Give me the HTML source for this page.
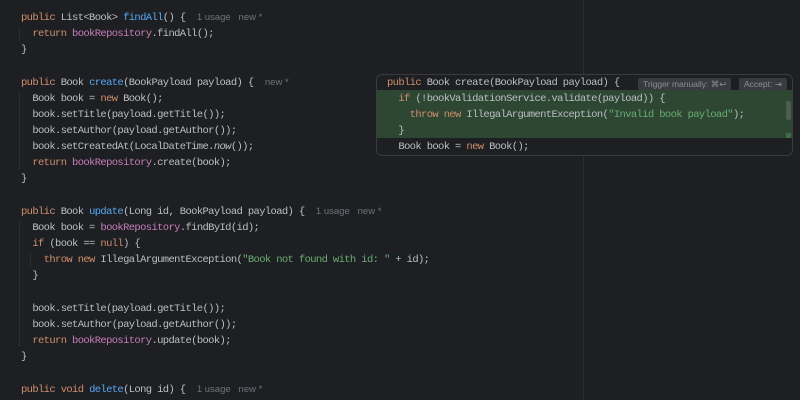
<!DOCTYPE html><html><head><style>
body{margin:0;width:800px;height:400px;background:#1e1f22;overflow:hidden;position:relative;font-family:"Liberation Mono",monospace;font-size:10.5px;letter-spacing:-0.63px;color:#bcbec4}
.l{position:absolute;left:21px;height:16px;line-height:16px;white-space:pre}
.k{color:#cf8e6d}.m{color:#56a8f5}.f{color:#c77dbb}.s{color:#6aab73}.i{font-style:italic}
.h{font-family:"Liberation Sans",sans-serif;font-size:9.5px;letter-spacing:0;color:#6f737a}
.g{position:absolute;width:1px;background:#2b2d30}
#pop{position:absolute;left:376px;top:74px;width:415px;height:80px;border:1px solid #393b40;border-radius:6px;background:#1e1f22;overflow:hidden}
#pop .l{left:10px}
.b{position:absolute;top:3px;height:12px;line-height:12px;background:#393b40;color:#8c8f95;font-family:"Liberation Sans",sans-serif;font-size:8.5px;letter-spacing:0;padding:0 5px;border-radius:2px}
</style></head><body>
<div class="g" style="left:583px;top:0;height:400px"></div>
<div class="g" style="left:19px;top:27px;height:14px"></div>
<div class="g" style="left:19px;top:91px;height:79px"></div>
<div class="g" style="left:19px;top:220px;height:127px"></div>
<div class="g" style="left:30px;top:253px;height:14px"></div>
<div class="l" style="top:10px"><span class="k">public</span> List&lt;Book&gt; <span class="m">findAll</span>() {  <span class="h">1 usage   new *</span></div>
<div class="l" style="top:26px">  <span class="k">return</span> <span class="f">bookRepository</span>.findAll();</div>
<div class="l" style="top:42px">}</div>
<div class="l" style="top:75px"><span class="k">public</span> Book <span class="m">create</span>(BookPayload payload) {  <span class="h">new *</span></div>
<div class="l" style="top:91px">  Book book = <span class="k">new</span> Book();</div>
<div class="l" style="top:107px">  book.setTitle(payload.getTitle());</div>
<div class="l" style="top:123px">  book.setAuthor(payload.getAuthor());</div>
<div class="l" style="top:139px">  book.setCreatedAt(LocalDateTime.<span class="i">now</span>());</div>
<div class="l" style="top:155px">  <span class="k">return</span> <span class="f">bookRepository</span>.create(book);</div>
<div class="l" style="top:171px">}</div>
<div class="l" style="top:204px"><span class="k">public</span> Book <span class="m">update</span>(Long id, BookPayload payload) {  <span class="h">1 usage   new *</span></div>
<div class="l" style="top:220px">  Book book = <span class="f">bookRepository</span>.findById(id);</div>
<div class="l" style="top:236px">  <span class="k">if</span> (book == <span class="k">null</span>) {</div>
<div class="l" style="top:252px">    <span class="k">throw new</span> IllegalArgumentException(<span class="s">"Book not found with id: "</span> + id);</div>
<div class="l" style="top:268px">  }</div>
<div class="l" style="top:301px">  book.setTitle(payload.getTitle());</div>
<div class="l" style="top:317px">  book.setAuthor(payload.getAuthor());</div>
<div class="l" style="top:333px">  <span class="k">return</span> <span class="f">bookRepository</span>.update(book);</div>
<div class="l" style="top:349px">}</div>
<div class="l" style="top:382px"><span class="k">public</span> <span class="k">void</span> <span class="m">delete</span>(Long id) {  <span class="h">1 usage   new *</span></div>
<div id="pop">
<div style="position:absolute;left:0;top:15px;width:415px;height:48px;background:#2d4733"></div>
<div class="l" style="top:0px"><span class="k">public</span> Book create(BookPayload payload) {</div>
<div class="b" style="left:261px">Trigger manually: ⌘↩</div>
<div class="b" style="left:362px">Accept: ⇥</div>
<div class="l" style="top:16px">  <span class="k">if</span> (!bookValidationService.validate(payload)) {</div>
<div class="l" style="top:32px">    <span class="k">throw new</span> IllegalArgumentException(<span class="s">"Invalid book payload"</span>);</div>
<div class="l" style="top:48px">  }</div>
<div class="l" style="top:64px">  Book book = <span class="k">new</span> Book();</div>
<div style="position:absolute;left:409px;top:26px;width:5px;height:19px;background:#4a5f4f;border-radius:2px"></div>
<div style="position:absolute;left:409px;top:58px;width:5px;height:5px;background:#3f6a48"></div>
</div>
</body></html>
